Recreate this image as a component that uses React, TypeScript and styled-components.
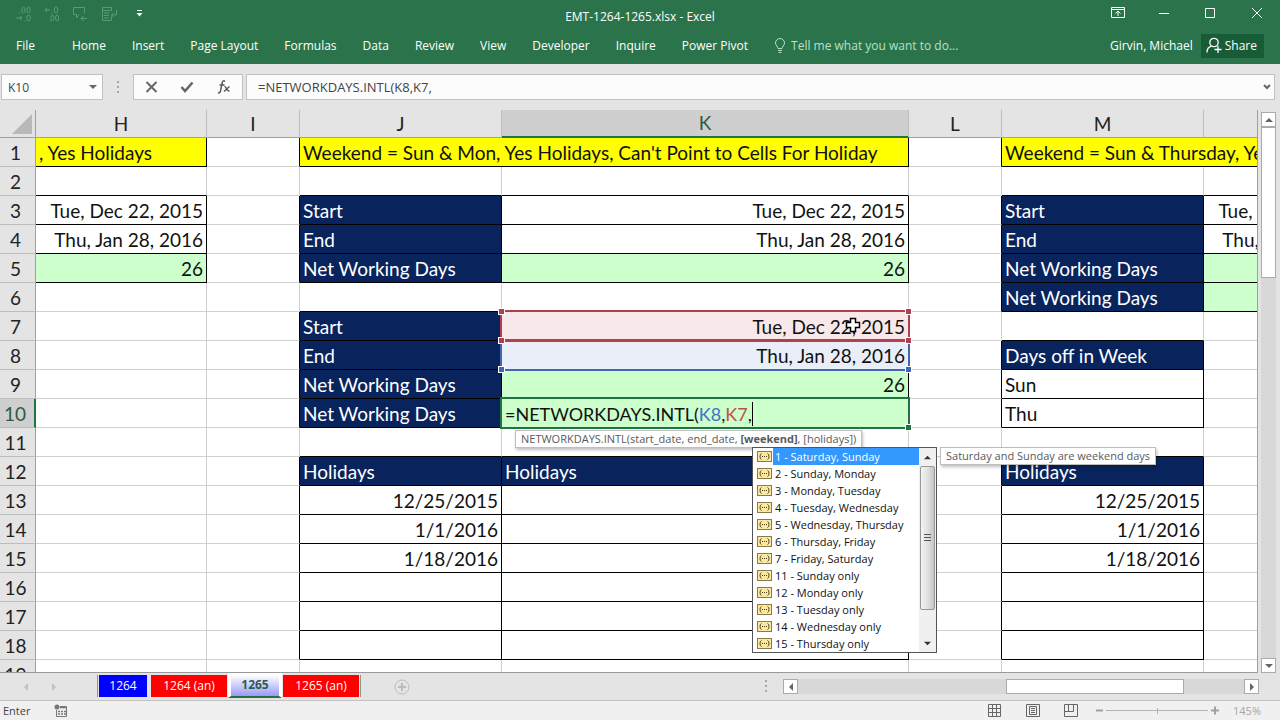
import React from "react";
import styled, { createGlobalStyle, css } from "styled-components";

const ui = `"Open Sans", "Noto Sans", sans-serif`;
const sheet = `Lato, "Open Sans", sans-serif`;

const GlobalStyle = createGlobalStyle`
  * { box-sizing: border-box; }
  body { margin: 0; font-family: ${ui}; font-size: 12px; color: #444; background: #e4e4e4; overflow: hidden; }
  button, input { font: inherit; color: inherit; margin: 0; padding: 0; border: 0; background: none; }
  svg { display: block; }
`;

const Page = styled.div`
  display: flex;
  flex-direction: column;
  height: 100vh;
`;

/* ---------- title bar and ribbon ---------- */

const Chrome = styled.header`
  background: #2a734b;
  color: #fff;
`;

const TitleBar = styled.div`
  display: grid;
  grid-template-columns: 1fr auto 1fr;
  align-items: center;
  height: 33px;
  padding: 0 16px;
`;

const QuickAccess = styled.div`
  display: flex;
  align-items: center;
  align-self: start;
  gap: 12px;
  height: 28px;
`;

const IconButton = styled.button<{ $faint?: boolean }>`
  display: flex;
  align-items: center;
  justify-content: center;
  color: ${(p) => (p.$faint ? "#5c9a76" : "#fff")};
`;

const Title = styled.h1`
  margin: 0;
  font-size: 12px;
  line-height: 16px;
  font-weight: 400;
`;

const WindowButtons = styled.div`
  display: flex;
  justify-content: flex-end;
  align-items: center;
  gap: 33px;
  height: 26px;
  align-self: start;
`;

const Ribbon = styled.nav`
  display: flex;
  align-items: center;
  height: 31px;
  padding: 0 16px 6px;
`;

const RibbonTabs = styled.div`
  display: flex;
  align-items: center;
  gap: 26px;
  flex: 1;
  white-space: nowrap;
`;

const RibbonTab = styled.button<{ $file?: boolean }>`
  line-height: 16px;
  margin-right: ${(p) => (p.$file ? "11px" : "0")};
`;

const TellMe = styled.label`
  display: flex;
  align-items: center;
  gap: 5px;
  color: #b9e0c8;
  input { width: 190px; line-height: 16px; }
  input::placeholder { color: #b9e0c8; opacity: 1; }
`;

const Account = styled.button`
  line-height: 16px;
  margin-right: 8px;
`;

const ShareButton = styled.button`
  display: flex;
  align-items: center;
  gap: 3px;
  height: 24px;
  padding: 0 7px 0 5px;
  background: #185c37;
`;

/* ---------- formula bar ---------- */

const FormulaBar = styled.div`
  display: flex;
  align-items: center;
  height: 46px;
  padding: 0 5px 0 1px;
`;

const FieldBox = styled.div<{ $width?: number }>`
  display: flex;
  align-items: center;
  justify-content: space-between;
  height: 26px;
  border: 1px solid #c2c2c2;
  background: #fcfcfc;
  padding: 0 5px 0 6px;
  ${(p) => (p.$width ? `width: ${p.$width}px; flex: none;` : "flex: 1; padding: 0 3px 0 11px; font-size: 13px;")}
  input { flex: 1; min-width: 0; }
`;

const FormulaButtons = styled(FieldBox)`
  justify-content: space-around;
  padding: 0;
  margin-right: 3px;
  color: #666;
`;

const Grip = styled.div<{ $narrow?: boolean }>`
  display: flex;
  justify-content: center;
  width: ${(p) => (p.$narrow ? 33 : 30)}px;
  flex: none;
`;

/* ---------- worksheet ---------- */

const SheetArea = styled.main`
  display: flex;
  flex: 1;
  min-height: 0;
  padding-right: 4px;
`;

const GridViewport = styled.div`
  flex: 1;
  min-width: 0;
  overflow: hidden;
  background: #fff;
  border-right: 1px solid #a0a0a0;
  border-bottom: 1px solid #999;
`;

const Grid = styled.table`
  width: 100%;
  table-layout: fixed;
  border-spacing: 0;
  font-family: ${sheet};
  font-size: 19px;
  line-height: 26px;
  color: #111;
`;

const headBase = css<{ $active?: boolean }>`
  padding: 0;
  font-weight: 400;
  background: ${(p) => (p.$active ? "#cfcfcf" : "#e4e4e4")};
  color: ${(p) => (p.$active ? "#2b5c43" : "#222")};
  text-align: center;
`;

const ColumnHead = styled.th<{ $active?: boolean }>`
  ${headBase}
  height: 28px;
  border-right: 1px solid #bdbdbd;
  border-bottom: ${(p) => (p.$active ? "2px solid #217346" : "1px solid #a0a0a0")};
`;

const Corner = styled.th`
  padding: 0 3px 3px 0;
  background: #e4e4e4;
  border-right: 1px solid #a0a0a0;
  border-bottom: 1px solid #a0a0a0;
  vertical-align: bottom;
  svg { margin-left: auto; }
`;

const RowHead = styled.th<{ $active?: boolean }>`
  ${headBase}
  height: 29px;
  padding: 2px 4px 0 0;
  border-right: ${(p) => (p.$active ? "2px solid #217346" : "1px solid #a0a0a0")};
  border-bottom: 1px solid #bdbdbd;
`;

type Fill = "navy" | "green" | "yellow" | "white" | "pink" | "blue";
const fills: Record<Fill, string> = {
  navy: "#09245c",
  green: "#ccffcc",
  yellow: "#ffff00",
  white: "#fff",
  pink: "#f8e8ea",
  blue: "#e9eef8",
};

const Cell = styled.td<{ $fill?: Fill; $right?: boolean; $bottom?: boolean; $num?: boolean; $anchor?: boolean }>`
  height: 29px;
  padding: 2px 3px 0;
  white-space: nowrap;
  background: ${(p) => fills[p.$fill ?? "white"]};
  color: ${(p) => (p.$fill === "navy" ? "#fff" : "#111")};
  text-align: ${(p) => (p.$num ? "right" : "left")};
  border-right: 1px solid ${(p) => (p.$right ? "#000" : "#d0d0d0")};
  border-bottom: 1px solid ${(p) => (p.$bottom ? "#000" : "#d0d0d0")};
  ${(p) => (p.$anchor ? "position: relative;" : "overflow: hidden;")}
`;

const RangeBox = styled.div<{ $color: string; $level: number }>`
  position: absolute;
  inset: -2px;
  z-index: ${(p) => p.$level};
  border: 2px solid ${(p) => p.$color};
  pointer-events: none;
`;

const Handle = styled.i<{ $color: string; $v: "top" | "bottom"; $h: "left" | "right" }>`
  position: absolute;
  ${(p) => p.$v}: -4px;
  ${(p) => p.$h}: -4px;
  width: 7px;
  height: 7px;
  border: 1px solid #fff;
  background: ${(p) => p.$color};
`;

const CrossCursor = styled.svg`
  position: absolute;
  right: 46px;
  top: 5px;
  z-index: 4;
`;

const CellEditor = styled.div`
  display: flex;
  align-items: center;
  font-size: 18px;
`;

const Ref = styled.span<{ $color: string }>`
  color: ${(p) => p.$color};
`;

const Caret = styled.i`
  width: 1px;
  height: 24px;
  background: #000;
`;

const Tip = styled.div<{ $left: number; $top: number }>`
  position: absolute;
  left: ${(p) => p.$left}px;
  top: ${(p) => p.$top}px;
  z-index: 5;
  height: 18px;
  padding: 0 5px;
  border: 1px solid #bebebe;
  background: #fff;
  box-shadow: 1px 2px 3px rgba(0, 0, 0, 0.25);
  color: #5a5a5a;
  font-family: ${ui};
  font-size: 11px;
  line-height: 15px;
`;

const Suggestions = styled.div`
  position: absolute;
  left: 250px;
  top: 48px;
  z-index: 6;
  display: flex;
  width: 185px;
  height: 206px;
  border: 1px solid #555;
  background: #fff;
  font-family: ${ui};
  font-size: 11px;
  color: #111;
`;

const OptionList = styled.ul`
  flex: 1;
  margin: 0;
  padding: 0 0 0 4px;
  list-style: none;
`;

const Option = styled.li<{ $selected?: boolean }>`
  display: flex;
  align-items: center;
  height: 17px;
  line-height: 17px;
  span {
    flex: 1;
    padding-left: 2px;
    background: ${(p) => (p.$selected ? "#3399ff" : "transparent")};
    color: ${(p) => (p.$selected ? "#fff" : "inherit")};
  }
`;

const ListScroll = styled.div`
  display: flex;
  flex-direction: column;
  align-items: center;
  width: 17px;
  background: #f0f0f0;
`;

const ListArrow = styled.button`
  display: flex;
  align-items: center;
  justify-content: center;
  width: 17px;
  height: 18px;
`;

const ListThumb = styled.div`
  display: flex;
  align-items: center;
  justify-content: center;
  width: 15px;
  height: 144px;
  margin-bottom: auto;
  border: 1px solid #989898;
  border-radius: 2px;
  background: linear-gradient(to right, #f4f4f4, #dcdcdc 60%, #c4c4c4);
`;

/* ---------- scroll bars ---------- */

const VScroll = styled.div`
  display: flex;
  flex-direction: column;
  width: 15px;
  margin: 2px 0 0 3px;
  background: #d8d8d8;
`;

const ScrollButton = styled.button`
  display: flex;
  align-items: center;
  justify-content: center;
  flex: none;
  width: 15px;
  height: 15px;
  border: 1px solid #ababab;
  background: #fff;
`;

const VThumb = styled.div`
  height: 151px;
  margin-bottom: auto;
  border: 1px solid #ababab;
  background: #fff;
`;

const HScroll = styled.div`
  display: flex;
  flex: none;
  width: 476px;
  background: #d8d8d8;
`;

const HThumb = styled.div`
  width: 178px;
  margin: 0 60px 0 auto;
  border: 1px solid #ababab;
  background: #fff;
`;

/* ---------- sheet tabs and status bar ---------- */

const TabStrip = styled.footer`
  display: flex;
  align-items: center;
  height: 28px;
  padding-right: 21px;
  border-bottom: 1px solid #c2c2c2;
`;

const TabArrows = styled.div`
  display: flex;
  align-items: center;
  gap: 20px;
  width: 97px;
  padding-left: 22px;
`;

const SheetTabs = styled.div`
  display: flex;
  align-items: center;
  align-self: stretch;
  border-left: 1px solid #8a9a8f;
  border-right: 1px solid #8a9a8f;
  margin: 2px 0 3px;
  padding: 0 1px;
  gap: 4px;
`;

const SheetTab = styled.button<{ $bg: string; $wide?: boolean; $current?: boolean }>`
  width: ${(p) => (p.$wide ? 76 : 48)}px;
  height: 22px;
  line-height: 20px;
  background: ${(p) => p.$bg};
  color: #fff;
  ${(p) =>
    p.$current &&
    css`
      width: 54px;
      height: 25px;
      margin: -2px -3px 0;
      border: solid #fff;
      border-width: 2px 3px 0;
      border-bottom: 2px solid #217346;
      color: #2b5c53;
      font-weight: 700;
    `}
`;

const AddSheet = styled.button`
  margin: 0 auto 0 33px;
`;

const StatusBar = styled.footer`
  display: flex;
  align-items: center;
  height: 19px;
  padding: 0 19px 0 3px;
  background: #f0f0f0;
  font-size: 11px;
  line-height: 16px;
`;

const MacroButton = styled.button`
  margin: 0 auto 0 24px;
`;

const ViewButtons = styled.div`
  display: flex;
  gap: 24px;
  margin-right: 18px;
`;

const ZoomControl = styled.div`
  display: flex;
  align-items: center;
  gap: 3px;
  margin-right: 13px;
  color: #a0a0a0;
`;

const ZoomSlider = styled.input`
  appearance: none;
  width: 102px;
  height: 6px;
  background:
    linear-gradient(#b4b4b4, #b4b4b4) center / 1px 6px no-repeat,
    linear-gradient(#b4b4b4, #b4b4b4) center / 100% 1px no-repeat;
  &::-webkit-slider-thumb { appearance: none; width: 1px; height: 1px; }
`;

const ZoomValue = styled.span`
  color: #a6a6a6;
`;

/* ---------- drawings ---------- */

const Arrow = ({ dir, color = "#666", size = 8 }: { dir: "up" | "down" | "left" | "right"; color?: string; size?: number }) => {
  const d = { up: "M0 6 L4 2 L8 6Z", down: "M0 2 L4 6 L8 2Z", left: "M6 0 L2 4 L6 8Z", right: "M2 0 L6 4 L2 8Z" }[dir];
  return (
    <svg width={size} height={size} viewBox="0 0 8 8" fill={color} aria-hidden>
      <path d={d} />
    </svg>
  );
};

const DotGrip = () => (
  <svg width="3" height="13" fill="#a6a6a6" aria-hidden>
    <rect x="0" y="0" width="2" height="2" />
    <rect x="0" y="5" width="2" height="2" />
    <rect x="0" y="10" width="2" height="2" />
  </svg>
);

const DecimalIcon = ({ more }: { more?: boolean }) => (
  <svg width="16" height="16" viewBox="0 0 16 16" fill="none" stroke="currentColor" aria-hidden>
    {more ? (
      <>
        <path d="M1 4h5M3 2L1 4l2 2M8 6.5v1M6 14.5v1" />
        <ellipse cx="12" cy="4" rx="1.8" ry="3" />
        <ellipse cx="8.5" cy="12" rx="1.6" ry="3" />
        <ellipse cx="13.2" cy="12" rx="1.6" ry="3" />
      </>
    ) : (
      <>
        <path d="M0 12h6M4 10l2 2-2 2M4 6.5v1M9 14.5v1" />
        <ellipse cx="7.5" cy="4" rx="1.6" ry="3" />
        <ellipse cx="12.5" cy="4" rx="1.6" ry="3" />
        <ellipse cx="12.5" cy="12" rx="1.8" ry="3" />
      </>
    )}
  </svg>
);

const CommentIcon = () => (
  <svg width="17" height="16" viewBox="0 0 17 16" fill="none" stroke="currentColor" aria-hidden>
    <path d="M7 8.500L4.500 12V8.500h-3v-7h11v6M9 12.500h6M11.500 10L9 12.500l2.500 2.500" />
  </svg>
);

const FormIcon = () => (
  <svg width="17" height="16" viewBox="0 0 17 16" fill="none" stroke="currentColor" aria-hidden>
    <path d="M1.500 1.500h9v3h-9zM1.500 4.500v10h9v-4M3 7h5M3 9.500h5M3 12h5M15.500 4v5h-5M12.500 7l-2 2 2 2" />
  </svg>
);

const FunctionTag = () => (
  <svg width="16" height="12" viewBox="0 0 16 12" aria-hidden>
    <rect x="0.500" y="0.500" width="14" height="10" fill="#fbe9a0" stroke="#8a7a4a" />
    <path d="M4.500 2.500Q3 3 3 5.500T4.500 8.500M10.500 2.500Q12 3 12 5.500T10.500 8.500" fill="none" stroke="#4a4020" />
    <path d="M5 5h1v1H5zM7 5h1v1H7zM9 5h1v1H9z" fill="#4a4020" />
  </svg>
);

/* ---------- data ---------- */

type CellData = { text?: string; fill?: Fill; num?: boolean; span?: number };
type Column = "H" | "I" | "J" | "K" | "L" | "M" | "N";
const columns: { id: Column; width: number }[] = [
  { id: "H", width: 171 },
  { id: "I", width: 93 },
  { id: "J", width: 202 },
  { id: "K", width: 407 },
  { id: "L", width: 93 },
  { id: "M", width: 202 },
  { id: "N", width: 171 },
];

const label = (text: string): CellData => ({ text, fill: "navy" });
const value = (text = "", fill: Fill = "white"): CellData => ({ text, fill, num: true });
const START = "Tue, Dec 22, 2015";
const END = "Thu, Jan 28, 2016";
const NET = "Net Working Days";

const cells: Record<number, Partial<Record<Column, CellData>>> = {
  1: {
    H: { text: ", Yes Holidays", fill: "yellow" },
    J: { text: "Weekend = Sun & Mon, Yes Holidays, Can't Point to Cells For Holiday", fill: "yellow", span: 2 },
    M: { text: "Weekend = Sun & Thursday, Yes Holidays", fill: "yellow", span: 2 },
  },
  3: { H: value(START), J: label("Start"), K: value(START), M: label("Start"), N: value(START) },
  4: { H: value(END), J: label("End"), K: value(END), M: label("End"), N: value(END) },
  5: { H: value("26", "green"), J: label(NET), K: value("26", "green"), M: label(NET), N: value("", "green") },
  6: { M: label(NET), N: value("", "green") },
  7: { J: label("Start"), K: value(START, "pink") },
  8: { J: label("End"), K: value(END, "blue"), M: label("Days off in Week") },
  9: { J: label(NET), K: value("26", "green"), M: { text: "Sun" } },
  10: { J: label(NET), K: { fill: "green" }, M: { text: "Thu" } },
  12: { J: label("Holidays"), K: label("Holidays"), M: label("Holidays") },
  13: { J: value("12/25/2015"), K: value(), M: value("12/25/2015") },
  14: { J: value("1/1/2016"), K: value(), M: value("1/1/2016") },
  15: { J: value("1/18/2016"), K: value(), M: value("1/18/2016") },
  16: { J: value(), K: value(), M: value() },
  17: { J: value(), K: value(), M: value() },
  18: { J: value(), K: value(), M: value() },
};

/* The cell drawn at a position, counting cells merged from the left. */
const at = (row: number, col: number): CellData | undefined => {
  const id = columns[col]?.id;
  if (!id) return undefined;
  const own = cells[row]?.[id];
  if (own) return own;
  const before = columns[col - 1]?.id;
  const left = before && cells[row]?.[before];
  return left && left.span ? left : undefined;
};

const options = [
  "1 - Saturday, Sunday",
  "2 - Sunday, Monday",
  "3 - Monday, Tuesday",
  "4 - Tuesday, Wednesday",
  "5 - Wednesday, Thursday",
  "6 - Thursday, Friday",
  "7 - Friday, Saturday",
  "11 - Sunday only",
  "12 - Monday only",
  "13 - Tuesday only",
  "14 - Wednesday only",
  "15 - Thursday only",
];

const RED = "#b0404f";
const BLUE = "#4068b0";

const Range = ({ color, level, corners }: { color: string; level: number; corners: ("top" | "bottom")[] }) => (
  <RangeBox $color={color} $level={level}>
    {corners.map((v) => (
      <React.Fragment key={v}>
        <Handle $color={color} $v={v} $h="left" />
        <Handle $color={color} $v={v} $h="right" />
      </React.Fragment>
    ))}
  </RangeBox>
);

const EditingCell = () => (
  <>
    <CellEditor role="textbox" aria-label="K10">
      =NETWORKDAYS.INTL(<Ref $color="#4472c4">K8</Ref>,<Ref $color="#c0504d">K7</Ref>,
      <Caret />
    </CellEditor>
    <RangeBox $color="#217346" $level={1}>
      <Handle $color="#217346" $v="bottom" $h="right" />
    </RangeBox>
    <Tip $left={13} $top={31} role="tooltip">
      NETWORKDAYS.INTL(start_date, end_date, <b>[weekend]</b>, [holidays])
    </Tip>
    <Suggestions>
      <OptionList role="listbox" aria-label="weekend">
        {options.map((o, i) => (
          <Option key={o} role="option" aria-selected={i === 0} $selected={i === 0}>
            <FunctionTag />
            <span>{o}</span>
          </Option>
        ))}
      </OptionList>
      <ListScroll>
        <ListArrow aria-label="Scroll up"><Arrow dir="up" color="#333" size={7} /></ListArrow>
        <ListThumb>
          <svg width="7" height="8" stroke="#555" aria-hidden>
            <path d="M0 .5h7M0 3.500h7M0 6.500h7" />
          </svg>
        </ListThumb>
        <ListArrow aria-label="Scroll down"><Arrow dir="down" color="#333" size={7} /></ListArrow>
      </ListScroll>
    </Suggestions>
    <Tip $left={438} $top={48} role="tooltip">Saturday and Sunday are weekend days</Tip>
  </>
);

const rows = Array.from({ length: 19 }, (_, i) => i + 1);

const Worksheet = () => (
  <Grid>
    <colgroup>
      <col width={36} />
      {columns.map((c) => <col key={c.id} width={c.width} />)}
      <col />
    </colgroup>
    <thead>
      <tr>
        <Corner aria-label="Select all">
          <svg width="20" height="20" fill="#b8b8b8" aria-hidden><path d="M20 0V20H0Z" /></svg>
        </Corner>
        {columns.map((c) => (
          <ColumnHead key={c.id} scope="col" $active={c.id === "K"}>{c.id === "N" ? "" : c.id}</ColumnHead>
        ))}
        <ColumnHead />
      </tr>
    </thead>
    <tbody>
      {rows.map((r) => (
        <tr key={r}>
          <RowHead scope="row" $active={r === 10}>{r}</RowHead>
          {columns.map((c, i) => {
            const own = cells[r]?.[c.id];
            const cell = at(r, i);
            if (cell && !own) return null;
            const last = i + (own?.span ?? 1) - 1;
            const editing = c.id === "K" && r === 10;
            const ranged = c.id === "K" && (r === 7 || r === 8);
            return (
              <Cell
                key={c.id}
                colSpan={own?.span}
                $fill={own?.fill}
                $num={own?.num}
                $right={!!cell || !!at(r, last + 1)}
                $bottom={!!cell || !!at(r + 1, i)}
                $anchor={editing || ranged}
              >
                {editing ? <EditingCell /> : own?.text}
                {ranged && r === 7 && (
                  <>
                    <Range color={RED} level={3} corners={["top", "bottom"]} />
                    <CrossCursor width="18" height="18" viewBox="0 0 18 18" aria-hidden>
                      <path d="M6.500 1.500h5v4h4v5h-4v4h-5v-4h-4v-5h4z" fill="#fff" stroke="#000" strokeWidth="1.500" />
                    </CrossCursor>
                  </>
                )}
                {ranged && r === 8 && <Range color={BLUE} level={2} corners={["bottom"]} />}
              </Cell>
            );
          })}
          <Cell />
        </tr>
      ))}
    </tbody>
  </Grid>
);

const ribbonTabs = ["Home", "Insert", "Page Layout", "Formulas", "Data", "Review", "View", "Developer", "Inquire", "Power Pivot"];

export default function App() {
  return (
    <Page>
      <GlobalStyle />
      <Chrome>
        <TitleBar>
          <QuickAccess>
            <IconButton $faint aria-label="Decrease decimal"><DecimalIcon /></IconButton>
            <IconButton $faint aria-label="Increase decimal"><DecimalIcon more /></IconButton>
            <IconButton $faint aria-label="Comment"><CommentIcon /></IconButton>
            <IconButton $faint aria-label="Form"><FormIcon /></IconButton>
            <IconButton aria-label="Customize toolbar">
              <svg width="18" height="8" aria-hidden><path d="M7 .5h5" stroke="#fff" /><path d="M6.500 3h6L9.500 6.500z" fill="#fff" /></svg>
            </IconButton>
          </QuickAccess>
          <Title>EMT-1264-1265.xlsx - Excel</Title>
          <WindowButtons>
            <IconButton aria-label="Ribbon display options">
              <svg width="14" height="12" fill="none" stroke="#fff" aria-hidden><path d="M.5.5h13v10H.5zM.5 2.500h13M7 9V4M4.500 6.500L7 4l2.500 2.500" /></svg>
            </IconButton>
            <IconButton aria-label="Minimize">
              <svg width="12" height="12" stroke="#fff" aria-hidden><path d="M1 6.500h10" /></svg>
            </IconButton>
            <IconButton aria-label="Maximize">
              <svg width="14" height="12" fill="none" stroke="#fff" aria-hidden><path d="M2.500 1.500h9v9h-9z" /></svg>
            </IconButton>
            <IconButton aria-label="Close">
              <svg width="14" height="12" stroke="#fff" aria-hidden><path d="M2 1l10 10M12 1L2 11" /></svg>
            </IconButton>
          </WindowButtons>
        </TitleBar>
        <Ribbon>
          <RibbonTabs>
            <RibbonTab $file>File</RibbonTab>
            {ribbonTabs.map((t) => <RibbonTab key={t}>{t}</RibbonTab>)}
            <TellMe>
              <svg width="12" height="15" fill="none" stroke="currentColor" aria-hidden>
                <path d="M4 10.500C4 8.500 1.500 7.500 1.500 5a4.500 4.500 0 0 1 9 0C10.500 7.500 8 8.500 8 10.500zM4 12.500h4M4.500 14.500h3" />
              </svg>
              <input aria-label="Tell me" placeholder="Tell me what you want to do..." />
            </TellMe>
          </RibbonTabs>
          <Account>Girvin, Michael</Account>
          <ShareButton>
            <svg width="16" height="17" fill="none" stroke="#fff" strokeWidth="1.300" aria-hidden>
              <circle cx="8" cy="5.500" r="4.200" />
              <path d="M1 15.500C1 12 3 9.800 5.500 9.200M12 9v7M8.500 12.500h7" />
            </svg>
            Share
          </ShareButton>
        </Ribbon>
      </Chrome>

      <FormulaBar>
        <FieldBox $width={102}>
          <input aria-label="Name box" defaultValue="K10" />
          <button aria-label="Name list"><Arrow dir="down" /></button>
        </FieldBox>
        <Grip><DotGrip /></Grip>
        <FormulaButtons $width={110}>
          <button aria-label="Cancel">
            <svg width="13" height="12" stroke="#666" strokeWidth="2" aria-hidden><path d="M1.500 1l10 10M11.500 1l-10 10" /></svg>
          </button>
          <button aria-label="Enter">
            <svg width="14" height="12" fill="none" stroke="#666" strokeWidth="2.500" aria-hidden><path d="M1.500 6l3.500 4L12.500 1.500" /></svg>
          </button>
          <button aria-label="Insert function">
            <svg width="14" height="16" fill="none" stroke="#555" strokeWidth="1.400" aria-hidden>
              <path d="M8 2.500C6.500 1 5.500 2 5 4.500L3.500 12C3.200 13.500 2 14.500 1 13.500M2.500 6H7.500M7.500 7.500C9 7 9.500 12.500 12.500 12M12.500 7.500L7 12.500" />
            </svg>
          </button>
        </FormulaButtons>
        <FieldBox>
          <input aria-label="Formula bar" defaultValue="=NETWORKDAYS.INTL(K8,K7," />
          <button aria-label="Expand formula bar">
            <svg width="8" height="8" fill="none" stroke="#666" strokeWidth="2" aria-hidden><path d="M1 2l3 3 3-3" /></svg>
          </button>
        </FieldBox>
      </FormulaBar>

      <SheetArea>
        <GridViewport><Worksheet /></GridViewport>
        <VScroll>
          <ScrollButton aria-label="Scroll up"><Arrow dir="up" /></ScrollButton>
          <VThumb />
          <ScrollButton aria-label="Scroll down"><Arrow dir="down" /></ScrollButton>
        </VScroll>
      </SheetArea>

      <TabStrip>
        <TabArrows>
          <Arrow dir="left" color="#c0c0c0" />
          <Arrow dir="right" color="#c0c0c0" />
        </TabArrows>
        <SheetTabs>
          <SheetTab $bg="#0000ff">1264</SheetTab>
          <SheetTab $bg="#ff0000" $wide>1264 (an)</SheetTab>
          <SheetTab $bg="linear-gradient(#fff, #9a9af5)" $current>1265</SheetTab>
          <SheetTab $bg="#ff0000" $wide>1265 (an)</SheetTab>
        </SheetTabs>
        <AddSheet aria-label="New sheet">
          <svg width="16" height="16" fill="none" stroke="#bcbcbc" aria-hidden>
            <circle cx="8" cy="8" r="7" />
            <path d="M8 4v8M4 8h8" strokeWidth="2" />
          </svg>
        </AddSheet>
        <Grip $narrow><DotGrip /></Grip>
        <HScroll>
          <ScrollButton aria-label="Scroll left"><Arrow dir="left" /></ScrollButton>
          <HThumb />
          <ScrollButton aria-label="Scroll right"><Arrow dir="right" /></ScrollButton>
        </HScroll>
      </TabStrip>

      <StatusBar>
        Enter
        <MacroButton aria-label="Record macro">
          <svg width="14" height="14" fill="none" stroke="#777" aria-hidden>
            <path d="M6 2.500h6.500v10h-10V6" />
            <path d="M6 3.500h6M4 7.500h2M7 7.500h2M10 7.500h2M4 10h2M7 10h2M10 10h2" strokeWidth="1.500" />
            <circle cx="3" cy="3" r="2.500" fill="#777" stroke="none" />
          </svg>
        </MacroButton>
        <ViewButtons>
          <button aria-label="Normal view">
            <svg width="14" height="14" fill="none" stroke="#666" aria-hidden><path d="M.5.5h12v12H.5zM4.500.5v12M8.500.5v12M.5 4.500h12M.5 8.500h12" /></svg>
          </button>
          <button aria-label="Page layout view">
            <svg width="14" height="14" fill="none" stroke="#666" aria-hidden><path d="M.5.5h13v12H.5zM3.500 2.500h7v8h-7zM5 4.500h4M5 6.500h4M5 8.500h4" /></svg>
          </button>
          <button aria-label="Page break view">
            <svg width="14" height="14" fill="none" stroke="#666" aria-hidden><path d="M.5.5h13v12H.5zM4.500.5v7M9.500.5v7M.5 7.500h9" /></svg>
          </button>
        </ViewButtons>
        <ZoomControl>
          <button aria-label="Zoom out"><svg width="7" height="9" stroke="#a0a0a0" strokeWidth="2" aria-hidden><path d="M0 4.500h7" /></svg></button>
          <ZoomSlider type="range" aria-label="Zoom" />
          <button aria-label="Zoom in"><svg width="9" height="9" stroke="#a0a0a0" strokeWidth="2" aria-hidden><path d="M0 4.500h8M4 0.500v8" /></svg></button>
        </ZoomControl>
        <ZoomValue>145%</ZoomValue>
      </StatusBar>
    </Page>
  );
}
